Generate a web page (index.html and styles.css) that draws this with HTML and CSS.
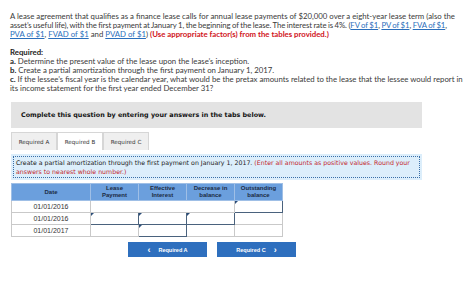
FILE: index.html
```html
<!DOCTYPE html>
<html lang="en">
<head>
  <meta charset="UTF-8">
  <title>Lease question</title>
  <link rel="stylesheet" href="styles.css">
</head>
<body>
  <div class="page">
    <p class="intro">
      A lease agreement that qualifies as a finance lease calls for annual lease payments of $20,000 over a eight-year lease term (also the<br>
      <span class="tight">asset’s useful life), with the first payment at January 1, the beginning of the lease. The interest rate is 4%. (<a href="#">FV of $1</a>, <a href="#">PV of $1</a>, <a href="#">FVA of $1</a>,</span><br>
      <a href="#">PVA of $1</a>, <a href="#">FVAD of $1</a> and <a href="#">PVAD of $1</a>) <span class="warn">(Use appropriate factor(s) from the tables provided.)</span>
    </p>

    <p class="required">
      <b>Required:</b><br>
      <b>a.</b> Determine the present value of the lease upon the lease’s inception.<br>
      <b>b.</b> Create a partial amortization through the first payment on January 1, 2017.<br>
      <b>c.</b> If the lessee’s fiscal year is the calendar year, what would be the pretax amounts related to the lease that the lessee would report in<br>
      its income statement for the first year ended December 31?
    </p>

    <div class="complete-box">Complete this question by entering your answers in the tabs below.</div>

    <div class="tabs">
      <div class="tab">Required A</div>
      <div class="tab active">Required B</div>
      <div class="tab">Required C</div>
    </div>

    <div class="note">
      <div class="note-inner">
        Create a partial amortization through the first payment on January 1, 2017. <span class="note-red">(Enter all amounts as positive values. Round your answers to nearest whole number.)</span>
      </div>
    </div>

    <table class="amort">
      <tr>
        <th class="col-date">Date</th>
        <th>Lease<br>Payment</th>
        <th>Effective<br>Interest</th>
        <th>Decrease in<br>balance</th>
        <th>Outstanding<br>balance</th>
      </tr>
      <tr>
        <td>01/01/2016</td>
        <td colspan="3" class="blank"></td>
        <td class="input"></td>
      </tr>
      <tr>
        <td>01/01/2016</td>
        <td class="input"></td>
        <td class="input"></td>
        <td class="input"></td>
        <td></td>
      </tr>
      <tr>
        <td>01/01/2017</td>
        <td></td>
        <td class="input"></td>
        <td></td>
        <td></td>
      </tr>
    </table>

    <div class="nav">
      <button class="nav-btn"><span class="chev">&lsaquo;</span>Required A</button>
      <button class="nav-btn">Required C<span class="chev right">&rsaquo;</span></button>
    </div>
  </div>
</body>
</html>
```

FILE: styles.css
```css
body {
  margin: 0;
  background: #fff;
  color: #3a3a3a;
  font-family: 'Lato', 'Open Sans', sans-serif;
}

.page {
  padding: 12px 0 0 10px;
}

.intro, .required {
  margin: 0;
  font-size: 7.8px;
  line-height: 9px;
  white-space: nowrap;
}

.tight {
  letter-spacing: -0.12px;
  word-spacing: -0.3px;
}

.intro a {
  color: #2a6ebb;
  text-decoration: underline;
}

.warn {
  color: #d0141c;
  font-weight: bold;
}

.required {
  margin-top: 9px;
}

.required b {
  color: #222;
}

.complete-box {
  margin: 9px 0 0 1px;
  width: 401px;
  height: 26px;
  padding-left: 10px;
  background: #e3e3e3;
  font-family: 'DejaVu Sans', Verdana, sans-serif;
  font-size: 6.4px;
  font-weight: bold;
  color: #111;
  line-height: 26px;
}

.tabs {
  display: flex;
  margin: 4px 0 0 1px;
  height: 18px;
}

.tab {
  width: 46px;
  height: 18px;
  box-sizing: border-box;
  border: 1px solid #d6d6d6;
  border-bottom: none;
  background: #efefef;
  font-family: 'DejaVu Sans', Verdana, sans-serif;
  font-size: 5.6px;
  color: #333;
  text-align: center;
  line-height: 18px;
}

.tab.active {
  background: #fff;
}

.note {
  margin: 4px 0 0 1px;
  width: 411px;
  padding: 2px;
  box-sizing: border-box;
  background: #dceefb;
}

.note-inner {
  border: 1px dotted #3a6fa8;
  padding: 1px 2px;
  font-family: 'DejaVu Sans', Verdana, sans-serif;
  font-size: 6.25px;
  line-height: 9px;
  color: #222;
}

.note-red {
  color: #c3262e;
}

.amort {
  margin: 3px 0 0 1px;
  border-collapse: collapse;
  font-family: 'Liberation Sans', Arial, sans-serif;
}

.amort th {
  background: #6b9fdd;
  color: #1c2b44;
  font-size: 6px;
  font-weight: bold;
  line-height: 7px;
  height: 16px;
  width: 47px;
  padding: 0;
  border: 1px solid #9fbfe6;
}

.amort th.col-date {
  width: 78px;
}

.amort td {
  height: 11px;
  padding: 0;
  border: 1px solid #c9c9c9;
  font-size: 7px;
  text-align: center;
  color: #333;
}

.amort td.input {
  position: relative;
  border: 1px solid #4a627d;
}

.amort td.input::before {
  content: "";
  position: absolute;
  top: 0;
  left: 0;
  border-top: 3px solid #2b4d78;
  border-right: 3px solid transparent;
}

.nav {
  display: flex;
  gap: 10px;
  margin: 5px 0 0 118px;
}

.nav-btn {
  width: 79px;
  height: 15px;
  padding: 0;
  border: none;
  background: #2e6fbe;
  color: #fff;
  font-family: 'Liberation Sans', Arial, sans-serif;
  font-size: 5.5px;
  font-weight: bold;
}

.chev {
  font-size: 9px;
  margin-right: 8px;
  vertical-align: -1px;
}

.chev.right {
  margin: 0 0 0 8px;
}
```
